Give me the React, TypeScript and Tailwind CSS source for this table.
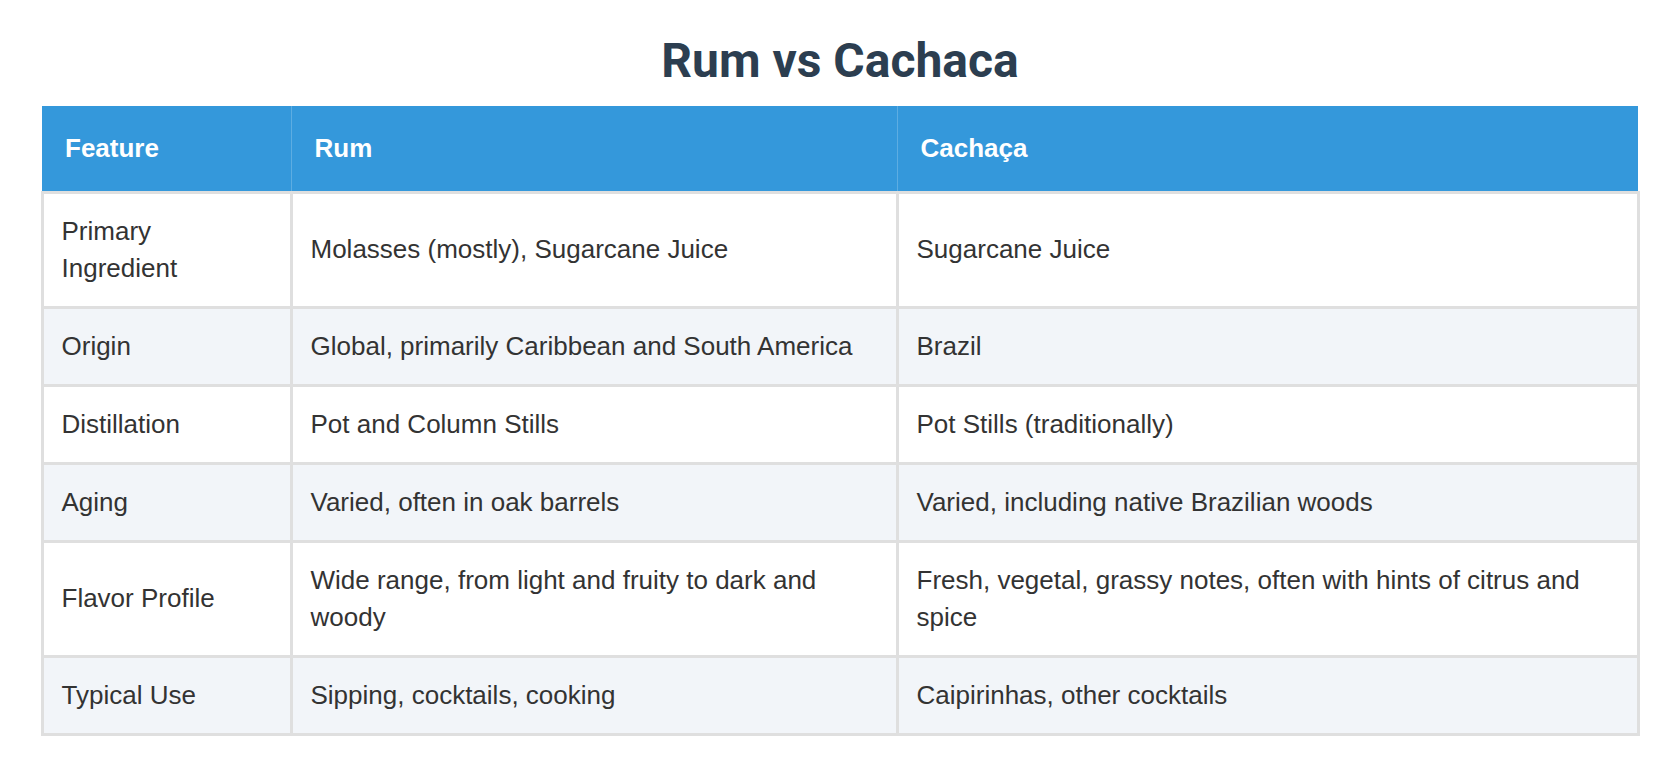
import React from "react";

const rows: [string, string, string][] = [
  ["Primary Ingredient", "Molasses (mostly), Sugarcane Juice", "Sugarcane Juice"],
  ["Origin", "Global, primarily Caribbean and South America", "Brazil"],
  ["Distillation", "Pot and Column Stills", "Pot Stills (traditionally)"],
  ["Aging", "Varied, often in oak barrels", "Varied, including native Brazilian woods"],
  ["Flavor Profile", "Wide range, from light and fruity to dark and woody", "Fresh, vegetal, grassy notes, often with hints of citrus and spice"],
  ["Typical Use", "Sipping, cocktails, cooking", "Caipirinhas, other cocktails"],
];

export default function App() {
  return (
    <div className="min-h-[778px] bg-white pt-[32px] font-['Liberation_Sans',Arial,sans-serif]">
      <h1 className="text-center font-['Roboto',sans-serif] font-bold text-[48px] leading-[57.6px] text-[#2c3e50] mb-[16px]">
        Rum vs Cachaca
      </h1>
      <table className="mx-auto w-[1599px] border-collapse table-fixed text-[26px] leading-[37px] text-[#333333]">
        <colgroup>
          <col className="w-[249px]" />
          <col className="w-[606px]" />
          <col />
        </colgroup>
        <thead>
          <tr className="bg-[#3498db] text-white">
            <th className="text-left font-bold px-[23px] py-[24px] border-r border-[#5dade2]">Feature</th>
            <th className="text-left font-bold px-[23px] py-[24px] border-r border-[#5dade2]">Rum</th>
            <th className="text-left font-bold px-[23px] py-[24px]">Cachaça</th>
          </tr>
        </thead>
        <tbody>
          {rows.map((r, i) => (
            <tr key={i} className={i % 2 === 1 ? "bg-[#f2f5f9]" : "bg-white"}>
              {r.map((c, j) => (
                <td key={j} className="border-[3px] border-[#dfdfdf] px-[18px] py-[19px] align-middle">
                  {c}
                </td>
              ))}
            </tr>
          ))}
        </tbody>
      </table>
    </div>
  );
}
